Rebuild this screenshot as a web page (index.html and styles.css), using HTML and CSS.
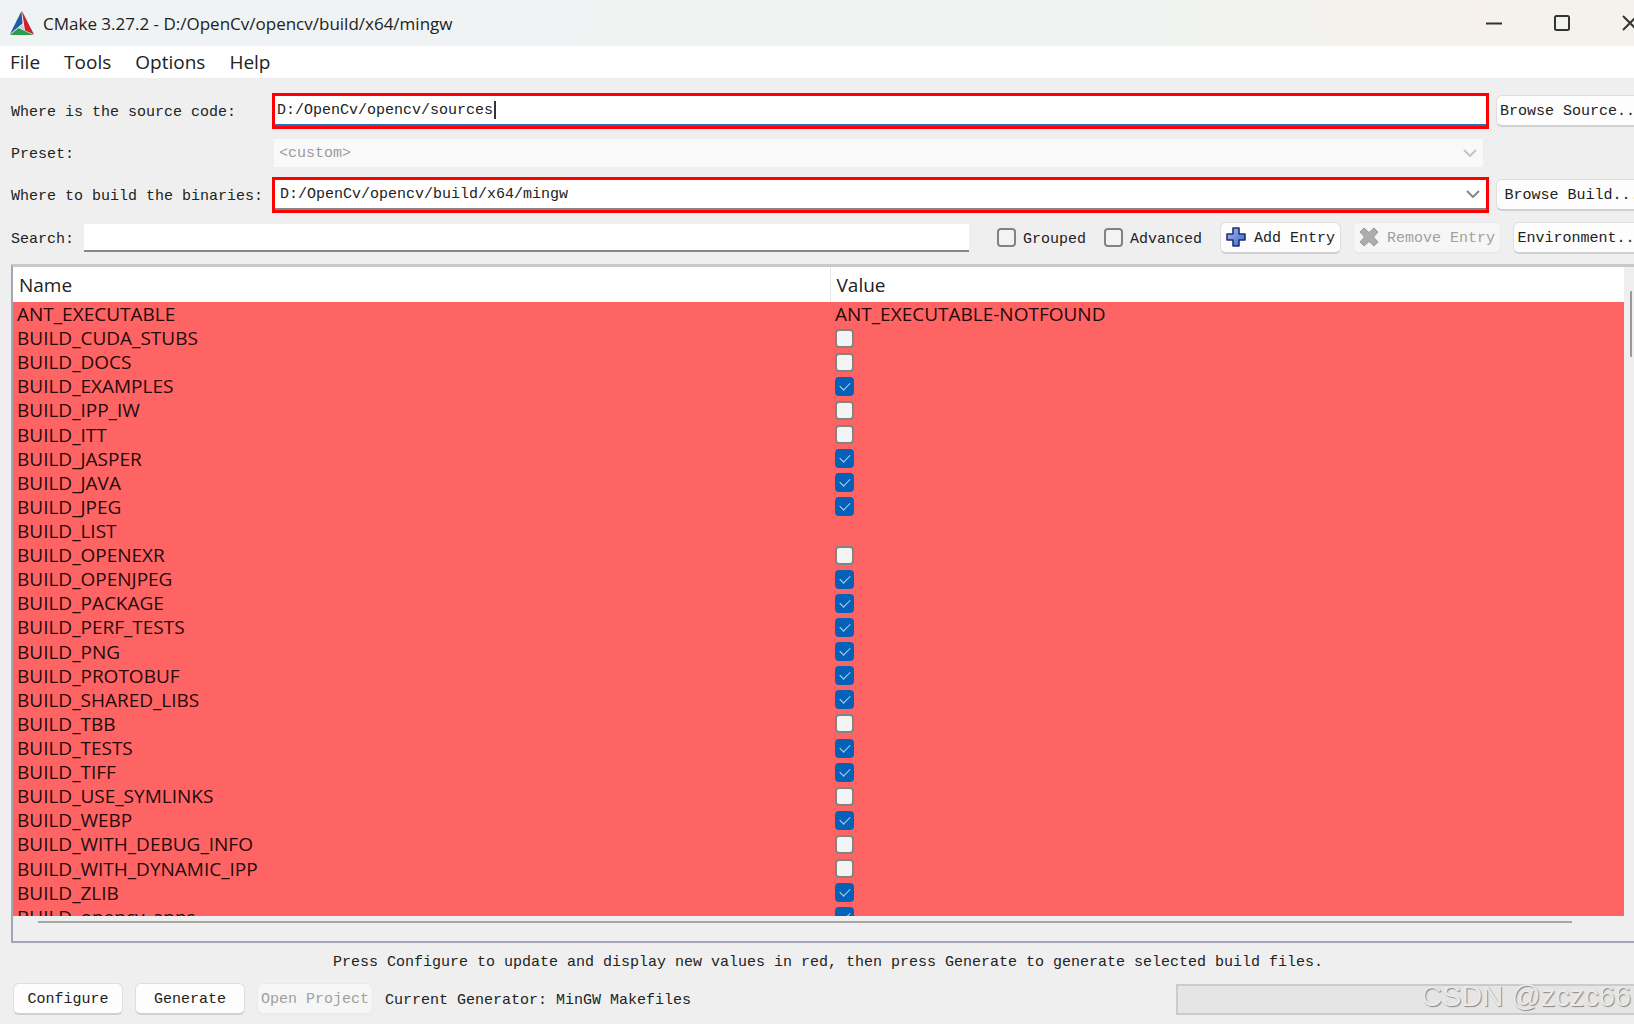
FILE: index.html
```html
<!DOCTYPE html>
<html lang="en">
<head>
  <meta charset="UTF-8" />
  <meta name="viewport" content="width=device-width, initial-scale=1.0" />
  <title>CMake 3.27.2 - D:/OpenCv/opencv/build/x64/mingw</title>
  <link rel="stylesheet" href="styles.css">
</head>
<body>
  <div class="window">
    <header class="title-bar">
      <svg class="logo" viewBox="0 0 24 24">
        <path d="M11.5 0 L0 23 L12.5 12.5 Z" fill="#1f5ca8"/>
        <path d="M12 0 L24 23.5 L15 19.5 Z" fill="#d0202e"/>
        <path d="M0 24 L8.5 17 L23.5 24 Z" fill="#2c9c4a"/>
        <path d="M12.5 12.5 L9 16.5 L15 19.5 Z" fill="#c9ced6"/>
      </svg>
      <span class="title-text">CMake 3.27.2 - D:/OpenCv/opencv/build/x64/mingw</span>
      <div class="window-controls">
        <button class="control-btn" aria-label="Minimize"><svg viewBox="0 0 18 18"><path d="M1 9.5H17"/></svg></button>
        <button class="control-btn" aria-label="Maximize"><svg viewBox="0 0 18 18"><rect x="2" y="2" width="14" height="14" rx="1.5"/></svg></button>
        <button class="control-btn" aria-label="Close"><svg viewBox="0 0 18 18"><path d="M2 2L16 16M16 2L2 16"/></svg></button>
      </div>
    </header>
    <nav class="menu-bar">
      <button class="menu-item">File</button>
      <button class="menu-item">Tools</button>
      <button class="menu-item">Options</button>
      <button class="menu-item">Help</button>
    </nav>
    <main class="panel">
      <div class="paths">
        <label for="source">Where is the source code:</label>
        <div class="field marked focused">
          <input type="text" id="source" value="D:/OpenCv/opencv/sources">
          <span class="caret"></span>
        </div>
        <button class="btn">Browse Source...</button>

        <label for="preset">Preset:</label>
        <div class="field disabled">
          <select id="preset" disabled><option>&lt;custom&gt;</option></select>
          <svg class="chevron" viewBox="0 0 14 8"><path d="M1 1L7 7L13 1"/></svg>
        </div>
        <span></span>

        <label for="build">Where to build the binaries:</label>
        <div class="field marked">
          <select id="build"><option>D:/OpenCv/opencv/build/x64/mingw</option></select>
          <svg class="chevron" viewBox="0 0 14 8"><path d="M1 1L7 7L13 1"/></svg>
        </div>
        <button class="btn">Browse Build...</button>
      </div>

      <div class="toolbar">
        <label for="search">Search:</label>
        <input type="text" id="search" class="search">
        <div class="check-group">
          <input type="checkbox" id="grouped" class="check">
          <label for="grouped">Grouped</label>
        </div>
        <div class="check-group">
          <input type="checkbox" id="advanced" class="check">
          <label for="advanced">Advanced</label>
        </div>
        <button class="btn btn-add">
          <svg class="icon" viewBox="0 0 20 20">
            <defs><linearGradient id="plus" x1="0" y1="0" x2="1" y2="1"><stop offset="0" stop-color="#a9bdf0"/><stop offset="1" stop-color="#3d62c8"/></linearGradient></defs>
            <path d="M7 1H13V7H19V13H13V19H7V13H1V7H7Z" fill="url(#plus)" stroke="#1d2f78" stroke-width="1.6" stroke-linejoin="round"/>
          </svg>
          <span>Add Entry</span>
        </button>
        <button class="btn btn-remove" disabled>
          <svg class="icon" viewBox="0 0 20 20">
            <path d="M5 1L10 5.5L15 1L19 5L14.5 10L19 15L15 19L10 14.5L5 19L1 15L5.5 10L1 5Z" fill="#adadad" stroke="#999" stroke-linejoin="round"/>
          </svg>
          <span>Remove Entry</span>
        </button>
        <button class="btn btn-env">Environment...</button>
      </div>

      <div class="cache">
        <div class="cache-view">
          <table>
            <thead>
              <tr><th>Name</th><th>Value</th></tr>
            </thead>
            <tbody id="entries"></tbody>
          </table>
        </div>
        <div class="scroll-v"></div>
        <div class="scroll-h"></div>
      </div>

      <p class="hint">Press Configure to update and display new values in red, then press Generate to generate selected build files.</p>

      <div class="actions">
        <button class="btn">Configure</button>
        <button class="btn">Generate</button>
        <button class="btn btn-open" disabled>Open Project</button>
        <span class="generator">Current Generator: MinGW Makefiles</span>
        <div class="progress" role="progressbar" aria-label="Progress"></div>
      </div>
    </main>
  </div>
  <div class="watermark">CSDN @zczc66</div>
  <script>
    const entries = [
      ['ANT_EXECUTABLE', 'ANT_EXECUTABLE-NOTFOUND'],
      ['BUILD_CUDA_STUBS', false],
      ['BUILD_DOCS', false],
      ['BUILD_EXAMPLES', true],
      ['BUILD_IPP_IW', false],
      ['BUILD_ITT', false],
      ['BUILD_JASPER', true],
      ['BUILD_JAVA', true],
      ['BUILD_JPEG', true],
      ['BUILD_LIST', ''],
      ['BUILD_OPENEXR', false],
      ['BUILD_OPENJPEG', true],
      ['BUILD_PACKAGE', true],
      ['BUILD_PERF_TESTS', true],
      ['BUILD_PNG', true],
      ['BUILD_PROTOBUF', true],
      ['BUILD_SHARED_LIBS', true],
      ['BUILD_TBB', false],
      ['BUILD_TESTS', true],
      ['BUILD_TIFF', true],
      ['BUILD_USE_SYMLINKS', false],
      ['BUILD_WEBP', true],
      ['BUILD_WITH_DEBUG_INFO', false],
      ['BUILD_WITH_DYNAMIC_IPP', false],
      ['BUILD_ZLIB', true],
      ['BUILD_opencv_apps', true]
    ];
    const tbody = document.getElementById('entries');
    entries.forEach(([name, value]) => {
      const row = tbody.insertRow();
      row.insertCell().textContent = name;
      const cell = row.insertCell();
      if (typeof value === 'boolean') {
        const box = document.createElement('input');
        box.type = 'checkbox';
        box.className = 'check';
        box.checked = value;
        box.setAttribute('aria-label', name);
        cell.appendChild(box);
      } else {
        cell.textContent = value;
      }
    });
  </script>
</body>
</html>
```
FILE: styles.css
```css
* {
  box-sizing: border-box;
}
body {
  margin: 0;
  height: 100vh;
  overflow: hidden;
  position: relative;
  background: #efefef;
  color: #222;
  font-family: 'Liberation Mono', monospace;
  font-size: 15px;
}
button, input, select {
  font: inherit;
  color: inherit;
}
/* the window runs a little past the right edge of the screen */
.window {
  width: calc(100% + 14px);
  height: 100%;
  display: flex;
  flex-direction: column;
}
.title-bar {
  flex: none;
  height: 46px;
  padding-left: 10px;
  display: flex;
  align-items: center;
  gap: 9px;
  background: linear-gradient(90deg, #eff3f5 0%, #f0f3f1 70%, #f6f2eb 90%, #f3f2ee 100%);
  font-family: 'Open Sans', sans-serif;
  font-size: 17px;
}
.logo {
  width: 24px;
  height: 24px;
}
.window-controls {
  margin-left: auto;
  margin-right: -16px;
  display: flex;
}
.control-btn {
  width: 68px;
  height: 46px;
  padding: 0;
  border: none;
  background: none;
}
.control-btn svg {
  display: block;
  margin: 0 auto;
  width: 18px;
  height: 18px;
  fill: none;
  stroke: #333;
  stroke-width: 2;
}
.menu-bar {
  flex: none;
  height: 32px;
  padding-left: 10px;
  display: flex;
  align-items: center;
  gap: 24px;
  background: #fff;
  font-family: 'Open Sans', sans-serif;
  font-size: 19px;
}
.menu-item {
  padding: 0;
  border: none;
  background: none;
}
.panel {
  flex: 1;
  min-height: 0;
  padding: 15px 0 9px 11px;
  display: flex;
  flex-direction: column;
}
label {
  padding-top: 3px;
}
.paths {
  display: grid;
  grid-template-columns: 254px 1fr 152px;
  grid-auto-rows: 36px;
  column-gap: 7px;
  row-gap: 6px;
  align-items: center;
}
.field {
  position: relative;
  height: 28px;
  margin: 0 6px 0 2px;
  background: #fff;
}
.field.marked {
  height: 36px;
  margin: 0;
  border: 3px solid #fe0000;
}
.field input, .field select {
  display: block;
  width: 100%;
  height: 100%;
  padding: 0 0 0 5px;
  border: none;
  border-bottom: 2px solid #868686;
  border-radius: 0;
  background: none;
  outline: none;
  appearance: none;
}
.field.focused input {
  padding-left: 2px;
  border-bottom-color: #1a74c4;
}
.field.disabled {
  background: #f9f9f9;
}
.field.disabled select {
  border: none;
  color: #9b9b9b;
  opacity: 1;
}
.caret {
  position: absolute;
  left: calc(3px + 24ch);
  top: 5px;
  width: 2px;
  height: 18px;
  background: #333;
}
.chevron {
  position: absolute;
  right: 6px;
  top: 10px;
  width: 14px;
  height: 8px;
  fill: none;
  stroke: #888;
  stroke-width: 2;
}
.field.disabled .chevron {
  stroke: #c4c4c4;
}
.btn {
  height: 32px;
  padding: 2px 3px 0;
  border: 1px solid #dedede;
  border-bottom: 2px solid #d0d0d0;
  border-radius: 6px;
  background: #fdfdfd;
  white-space: nowrap;
}
.btn:disabled {
  border-color: #eaeaea;
  background: #f6f6f6;
  color: #a0a0a0;
}
.toolbar {
  margin-top: 8px;
  height: 33px;
  display: flex;
  align-items: center;
}
.search {
  flex: 1;
  min-width: 0;
  height: 28px;
  margin: 0 28px 0 10px;
  border: none;
  border-bottom: 2px solid #868686;
  background: #fff;
}
.check-group {
  display: flex;
  align-items: center;
  gap: 7px;
  margin-right: 18px;
}
.check {
  appearance: none;
  flex: none;
  display: block;
  position: relative;
  width: 19px;
  height: 19px;
  margin: 0;
  border: 2px solid #838383;
  border-radius: 4px;
  background: #f3f3f3;
}
.check:checked {
  border-color: #0560b8;
  background: #0560b8;
}
.check:checked::before {
  content: '';
  position: absolute;
  left: 3px;
  top: 3px;
  width: 9px;
  height: 5px;
  border-left: 1px solid #b5d6f2;
  border-bottom: 1px solid #b5d6f2;
  transform: rotate(-45deg);
}
.icon {
  width: 20px;
  height: 20px;
}
.btn-add, .btn-remove {
  display: flex;
  align-items: center;
  gap: 8px;
  padding: 0 5px;
  margin-right: 12px;
}
.btn span {
  padding-top: 2px;
}
.btn-env {
  width: 135px;
}
.cache {
  flex: 1;
  min-height: 0;
  margin-top: 10px;
  display: grid;
  grid-template-columns: 1fr 24px;
  grid-template-rows: 1fr 25px;
  border: 2px solid #a2a8b3;
  border-top: 3px solid #c9c8cf;
  border-right: none;
}
.cache-view {
  min-height: 0;
  overflow: hidden;
}
table {
  width: 100%;
  height: 662px;
  table-layout: fixed;
  border-collapse: collapse;
  background: #ff6464;
  color: #26090b;
  font-family: 'Open Sans', sans-serif;
  font-size: 19px;
  line-height: 22px;
}
th {
  height: 35px;
  padding: 0 6px;
  background: #fff;
  color: #222;
  font-weight: 400;
  text-align: left;
}
th:first-child {
  width: 817px;
  border-right: 1px solid #e6e6e6;
}
td {
  padding: 0 5px;
}
td:first-child {
  padding-left: 4px;
}
.scroll-v {
  width: 2px;
  height: 66px;
  margin: 24px 0 0 6px;
  border-radius: 1px;
  background: #999;
}
.scroll-h {
  height: 2px;
  margin: 5px 52px 0 25px;
  background: #a6a6a6;
}
.hint {
  margin: 9px 0;
  padding-right: 3px;
  line-height: 22px;
  text-align: center;
}
.actions {
  display: flex;
  align-items: center;
  gap: 12px;
  padding-left: 2px;
}
.actions .btn {
  flex: none;
  width: 110px;
}
.actions .btn-open {
  width: 116px;
  padding: 2px 0 0;
}
.generator {
  padding-top: 3px;
}
.progress {
  width: 472px;
  height: 31px;
  margin-left: auto;
  border: 2px solid #cbcbcb;
  background: #e5e5e5;
}
.watermark {
  position: absolute;
  right: 3px;
  bottom: 10px;
  color: #e9e9e9;
  font-family: 'Liberation Sans', sans-serif;
  font-size: 29px;
  line-height: 36px;
  text-shadow: 1px 1px 1px #888;
}
```
